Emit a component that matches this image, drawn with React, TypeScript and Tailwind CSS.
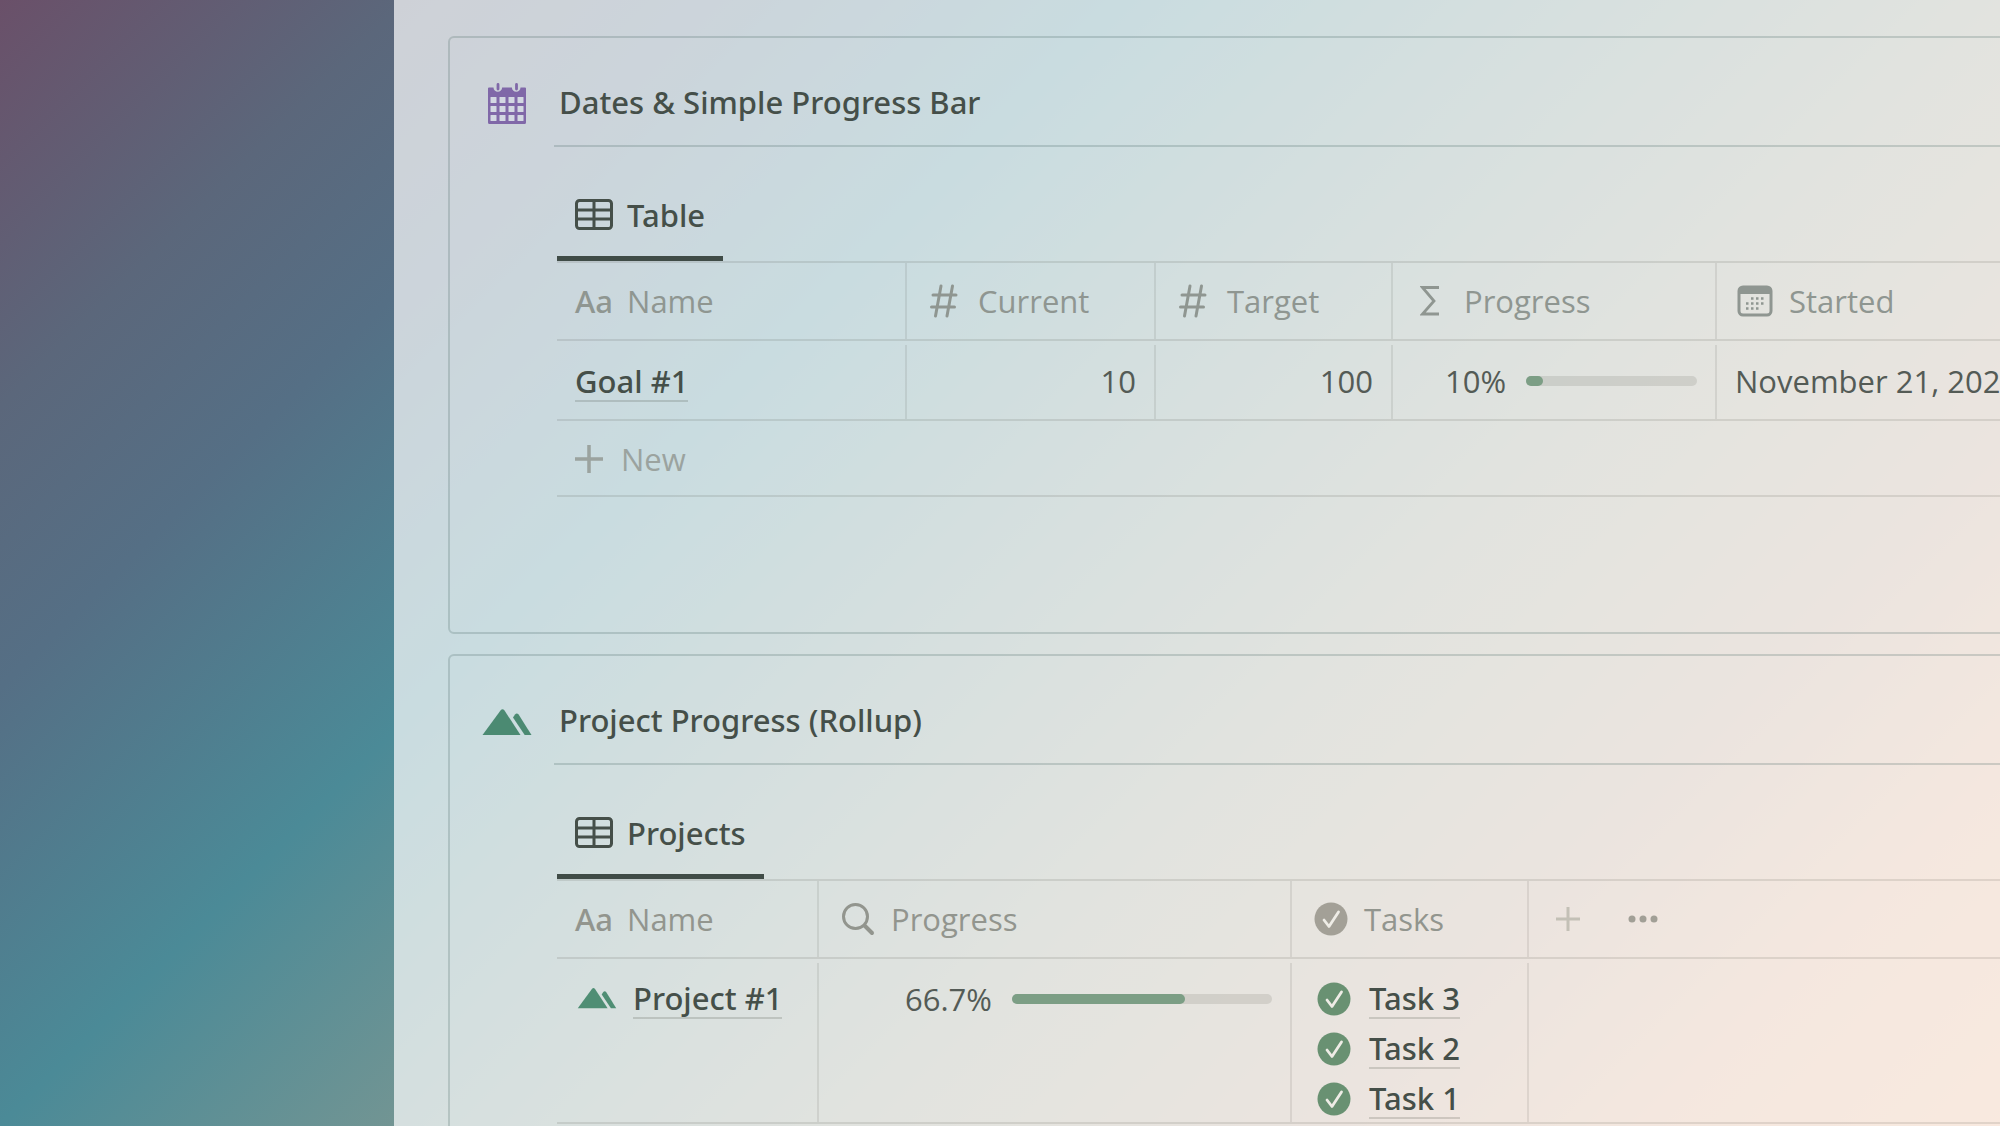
import { useId, type ReactNode } from 'react';

interface IconProps {
  className?: string;
}

function CalendarIcon({ className }: IconProps) {
  const cols = [4, 13, 22, 31];
  const rows = [14, 23, 32];
  return (
    <svg viewBox="0 0 40 42" className={className} aria-hidden="true">
      <path
        fill="currentColor"
        d="M2 4.500h4.500a4.300 4.300 0 0 0 8.600 0h9.800a4.300 4.300 0 0 0 8.600 0H38a1 1 0 0 1 1 1v34a1.500 1.500 0 0 1-1.500 1.500h-35A1.500 1.500 0 0 1 1 39.500v-34a1 1 0 0 1 1-1z"
      />
      <path stroke="currentColor" strokeWidth="2.800" strokeLinecap="round" d="M11 1.500V6M29.500 1.500V6" />
      {rows.map((y) =>
        cols.map((x) => <rect key={`${x}-${y}`} x={x - 0.5} y={y} width="6" height="6" rx="0.500" fill="#d3d8e2" />)
      )}
    </svg>
  );
}

function MountainIcon({ className }: IconProps) {
  return (
    <svg viewBox="0 0 50 28" className={className} fill="currentColor" aria-hidden="true">
      <path d="M.5 27 18.500 2.500q2-2.500 4 0L38.500 27z" />
      <path d="m31 9.500 2-3q1.800-2 3.600 0L49.500 27h-6.800z" />
    </svg>
  );
}

function TableIcon({ className }: IconProps) {
  return (
    <svg viewBox="0 0 38 32" className={className} fill="none" stroke="currentColor" aria-hidden="true">
      <rect x="1.500" y="1.500" width="35" height="28" rx="3" strokeWidth="3" />
      <path strokeWidth="3" d="M2 11h34M2 20h34M19 2v27" />
    </svg>
  );
}

function HashIcon({ className }: IconProps) {
  return (
    <svg viewBox="0 0 28 34" className={className} fill="none" stroke="currentColor" strokeWidth="3" strokeLinecap="round" aria-hidden="true">
      <path d="M11 2 5.500 32M22.500 2 17 32M3 11h23M1.500 23h23" />
    </svg>
  );
}

function SigmaIcon({ className }: IconProps) {
  return (
    <svg viewBox="0 0 20 32" className={className} fill="none" stroke="currentColor" strokeWidth="2.800" aria-hidden="true">
      <path d="M19 2.500H2.500L14 16 2.500 29H19" />
    </svg>
  );
}

function DateIcon({ className }: IconProps) {
  return (
    <svg viewBox="0 0 38 32" className={className} fill="none" stroke="currentColor" aria-hidden="true">
      <rect x="2" y="2" width="32" height="28" rx="4" strokeWidth="3" />
      <path strokeWidth="7" d="M3 5.500h30" />
      <path strokeWidth="2.500" strokeDasharray="2.500 2.500" d="M14 13.500h15M9 18.500h20M9 23.500h15" />
    </svg>
  );
}

function SearchIcon({ className }: IconProps) {
  return (
    <svg viewBox="0 0 34 34" className={className} fill="none" stroke="currentColor" strokeWidth="3" aria-hidden="true">
      <circle cx="14.500" cy="14.500" r="12" />
      <path strokeWidth="4" strokeLinecap="round" d="m24 24 7 7" />
    </svg>
  );
}

function CheckIcon({ className }: IconProps) {
  return (
    <svg viewBox="0 0 34 34" className={className} aria-hidden="true">
      <circle cx="17" cy="17" r="16.500" fill="currentColor" />
      <path d="m10 18 5 6.500L24.500 10" fill="none" stroke="#eeece6" strokeWidth="2.800" strokeLinecap="round" strokeLinejoin="round" />
    </svg>
  );
}

function PlusIcon({ className }: IconProps) {
  return (
    <svg viewBox="0 0 28 28" className={className} stroke="currentColor" strokeWidth="3.500" aria-hidden="true">
      <path d="M14 0v28M0 14h28" />
    </svg>
  );
}

function DotsIcon({ className }: IconProps) {
  return (
    <svg viewBox="0 0 30 8" className={className} fill="currentColor" aria-hidden="true">
      <circle cx="4" cy="4" r="3.500" />
      <circle cx="15" cy="4" r="3.500" />
      <circle cx="26" cy="4" r="3.500" />
    </svg>
  );
}

interface ProgressProps {
  label: string;
  value: number;
}

function Progress({ label, value }: ProgressProps) {
  return (
    <div className="flex h-10 items-center justify-end gap-5">
      <span>{label}</span>
      <div role="progressbar" aria-valuenow={value} aria-label="Progress" className="h-[10px] flex-1 rounded-full bg-[#373c32]/12">
        <div className="h-full rounded-full bg-[#7c9e85]" style={{ width: `${value}%` }} />
      </div>
    </div>
  );
}

interface HeadCellProps {
  icon: ReactNode;
  label: string;
  className?: string;
}

function HeadCell({ icon, label, className = '' }: HeadCellProps) {
  return (
    <th scope="col" className={`h-20 border-y-2 border-[#373c32]/12 p-0 font-normal ${className}`}>
      <div className="flex h-[76px] items-center border-r-2 border-[#373c32]/10 pr-4 pl-[18px]">
        {icon}
        <span>{label}</span>
      </div>
    </th>
  );
}

interface CellProps {
  children?: ReactNode;
  last?: boolean;
  className?: string;
}

function Cell({ children, last, className = '' }: CellProps) {
  return (
    <td className="h-20 border-b-2 border-[#373c32]/12 p-0 pt-1 align-top">
      <div className={`h-full min-h-[74px] px-[18px] pt-4 ${last ? '' : 'border-r-2 border-[#373c32]/10'} ${className}`}>{children}</div>
    </td>
  );
}

function PageLink({ children }: { children: ReactNode }) {
  return (
    <a href="#" className="inline-block border-b-2 border-[#373c32]/18 font-['Noto_Sans','Open_Sans',sans-serif] leading-[38px] font-medium text-[#454f49]">
      {children}
    </a>
  );
}

interface CardProps {
  icon: ReactNode;
  title: string;
  tab: string;
  children: ReactNode;
}

function Card({ icon, title, tab, children }: CardProps) {
  const titleId = useId();
  return (
    <section aria-labelledby={titleId} className="flex min-h-[598px] rounded-md border-2 border-[#41605a]/22">
      <div className="flex w-[104px] shrink-0 flex-col items-center pt-11 pl-[10px]">
        <div className="flex h-11 items-center">{icon}</div>
      </div>
      <div className="min-w-0 flex-1 overflow-hidden">
        <h2
          id={titleId}
          className="h-[109px] border-b-2 border-[#41605a]/22 pt-[42px] pl-[5px] font-['Noto_Sans','Open_Sans',sans-serif] text-[31px] leading-[44px] font-medium text-[#454f49]"
        >
          {title}
        </h2>
        <div className="pt-[38px] pl-[3px]">
          <div role="tablist" className="flex">
            <button
              role="tab"
              aria-selected="true"
              className="flex h-[76px] items-start gap-[14px] border-b-[5px] border-[#404c47] px-[18px] pt-2 font-['Noto_Sans','Open_Sans',sans-serif] text-[31px] leading-[44px] font-medium text-[#454f49]"
            >
              <TableIcon className="mt-[6px] h-8 w-[38px]" />
              {tab}
            </button>
          </div>
          {children}
        </div>
      </div>
    </section>
  );
}

export default function App() {
  return (
    <div className="flex h-screen overflow-hidden bg-[linear-gradient(135deg,#6a5069_0%,#5b677b_13%,#556f85_22%,#4b8a97_36%,#739593_49%,#9da295_64%,#bca594_78%,#dbb093_89%,#e9b694_100%)] font-['Open_Sans','Noto_Sans',sans-serif]">
      <aside className="w-[394px] shrink-0" />
      <main className="min-w-0 flex-1 overflow-hidden bg-white/70 pt-9 pl-[54px]">
        <div className="flex w-[calc(100%+60px)] flex-col gap-5">
          <Card icon={<CalendarIcon className="h-[42px] w-10 text-[#8068a8]" />} title="Dates & Simple Progress Bar" tab="Table">
            <table className="w-full table-fixed border-separate border-spacing-0 text-left text-[31px] leading-10 text-[#545b56]">
              <thead className="text-[#8f9691]">
                <tr>
                  <HeadCell className="w-[350px]" icon={<span className="mr-[14px] font-['Noto_Sans','Open_Sans',sans-serif] font-medium">Aa</span>} label="Name" />
                  <HeadCell className="w-[249px]" icon={<HashIcon className="mr-5 ml-[5px] h-[34px] w-7" />} label="Current" />
                  <HeadCell className="w-[237px]" icon={<HashIcon className="mr-5 ml-[5px] h-[34px] w-7" />} label="Target" />
                  <HeadCell className="w-[324px]" icon={<SigmaIcon className="mr-6 ml-[9px] h-8 w-5" />} label="Progress" />
                  <HeadCell icon={<DateIcon className="mr-[14px] ml-[2px] h-8 w-[38px]" />} label="Started" />
                </tr>
              </thead>
              <tbody>
                <tr>
                  <Cell>
                    <PageLink>Goal #1</PageLink>
                  </Cell>
                  <Cell className="text-right">10</Cell>
                  <Cell className="text-right">100</Cell>
                  <Cell className="pl-[52px]">
                    <Progress label="10%" value={10} />
                  </Cell>
                  <Cell last className="whitespace-nowrap">
                    November 21, 2022
                  </Cell>
                </tr>
              </tbody>
            </table>
            <button className="flex h-[76px] w-full items-center gap-[18px] border-b-2 border-[#373c32]/12 pt-[2px] pl-[18px] text-[31px] leading-10 text-[#9ba39f]">
              <PlusIcon className="size-7" />
              New
            </button>
          </Card>

          <Card icon={<MountainIcon className="h-7 w-[50px] text-[#4b8a72]" />} title="Project Progress (Rollup)" tab="Projects">
            <table className="w-full table-fixed border-separate border-spacing-0 text-left text-[31px] leading-10 text-[#545b56]">
              <thead className="text-[#92958e]">
                <tr>
                  <HeadCell className="w-[262px]" icon={<span className="mr-[14px] font-['Noto_Sans','Open_Sans',sans-serif] font-medium">Aa</span>} label="Name" />
                  <HeadCell className="w-[473px]" icon={<SearchIcon className="mr-4 ml-1 size-[34px]" />} label="Progress" />
                  <HeadCell className="w-[237px]" icon={<CheckIcon className="mr-4 ml-1 size-[34px] text-[#a3a097]" />} label="Tasks" />
                  <th className="border-y-2 border-[#373c32]/12 p-0">
                    <div className="flex items-center gap-12 pl-[27px]">
                      <button aria-label="Add property">
                        <PlusIcon className="size-6 text-[#c3c0b6]" />
                      </button>
                      <button aria-label="More options">
                        <DotsIcon className="h-2 w-[30px] text-[#a19f96]" />
                      </button>
                    </div>
                  </th>
                </tr>
              </thead>
              <tbody>
                <tr>
                  <Cell>
                    <div className="flex items-start gap-4 pl-[2px]">
                      <MountainIcon className="mt-2 h-[22px] w-10 shrink-0 text-[#4f8e74]" />
                      <PageLink>Project #1</PageLink>
                    </div>
                  </Cell>
                  <Cell className="pl-[86px]">
                    <Progress label="66.7%" value={66.7} />
                  </Cell>
                  <Cell>
                    <ul className="flex flex-col gap-[10px] pb-[3px] pl-[7px]">
                      {['Task 3', 'Task 2', 'Task 1'].map((task) => (
                        <li key={task} className="flex h-10 items-center gap-[18px]">
                          <CheckIcon className="size-[34px] shrink-0 text-[#699172]" />
                          <PageLink>{task}</PageLink>
                        </li>
                      ))}
                    </ul>
                  </Cell>
                  <Cell last />
                </tr>
              </tbody>
            </table>
          </Card>
        </div>
      </main>
    </div>
  );
}
